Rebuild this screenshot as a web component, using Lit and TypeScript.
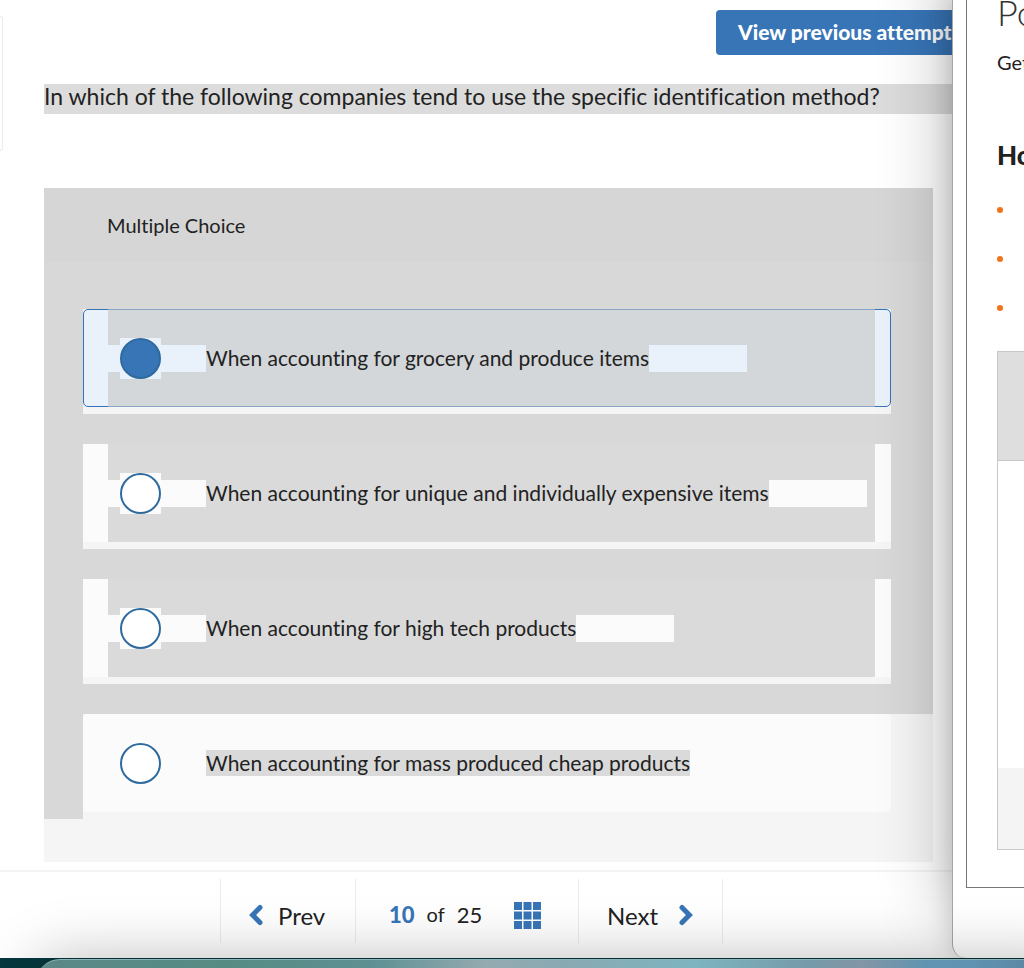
import { LitElement, html, css } from "lit";
import { customElement, state } from "lit/decorators.js";
import { classMap } from "lit/directives/class-map.js";

interface Choice {
  id: string;
  text: string;
}

const HIGHLIGHTED: Choice[] = [
  { id: "a", text: "When accounting for grocery and produce items" },
  { id: "b", text: "When accounting for unique and individually expensive items" },
  { id: "c", text: "When accounting for high tech products" },
];
const LAST: Choice = { id: "d", text: "When accounting for mass produced cheap products" };

@customElement("quiz-card")
class QuizCard extends LitElement {
  @state() private picked = "a";

  static styles = css`
    :host { display: block; background: #f5f5f5; padding-bottom: 43px; }
    .kind {
      margin: 0; padding: 0 63px; height: 74px; line-height: 74px;
      background: #d6d6d6; font-size: 20px; font-weight: 400;
    }
    .choices { border-left: 39px solid #d8d8d8; }
    .marked { background: #d8d8d8; padding: 47px 42px 30px 0; display: flex; flex-direction: column; gap: 30px; }
    .slot { background: #f5f5f5; padding-bottom: 7px; }
    .row { --paper: #fbfbfb; --shade: #dadada; background: var(--paper); padding: 0 16px 0 25px; }
    .line { display: flex; align-items: center; height: 98px; box-sizing: border-box; background: var(--shade); }
    .row.picked {
      --paper: #e9f1fb; --shade: #d3d7da;
      border: 1px solid #3374b6; border-radius: 5px; padding: 0 15px 0 24px;
    }
    .picked .line { margin: -1px 0; border: solid #8aa5c3; border-width: 1px 0; }
    .band { height: 27px; background: var(--paper); }
    .lead { width: 12px; }
    .mid { width: 45px; }
    .tail { width: 98px; }
    .well { display: flex; background: var(--paper); }
    .dot {
      appearance: none; margin: 0; width: 41px; height: 41px;
      border: 2px solid #2f6a9f; border-radius: 50%; background: #fff;
    }
    .dot:checked { background: #3875b7; }
    label { font-size: 21px; line-height: 26px; white-space: nowrap; }
    .final { margin-right: 42px; background: none; }
    .final .row { border-radius: 4px; }
    .final .line { background: none; }
    .final label { background: #dadada; }
  `;

  private choice(c: Choice, final = false) {
    return html`
      <div class=${classMap({ slot: true, final })}>
        <div class=${classMap({ row: true, picked: this.picked === c.id })}>
          <div class="line">
            <span class="band lead"></span>
            <span class="well">
              <input class="dot" type="radio" name="answer" id=${c.id}
                .checked=${this.picked === c.id} @change=${() => (this.picked = c.id)} />
            </span>
            <span class="band mid"></span>
            <label for=${c.id}>${c.text}</label>
            ${final ? null : html`<span class="band tail"></span>`}
          </div>
        </div>
      </div>`;
  }

  render() {
    return html`
      <h2 class="kind">Multiple Choice</h2>
      <div class="choices" role="radiogroup" aria-label="Multiple Choice">
        <div class="marked">${HIGHLIGHTED.map((c) => this.choice(c))}</div>
        ${this.choice(LAST, true)}
      </div>`;
  }
}

@customElement("quiz-pager")
class QuizPager extends LitElement {
  static styles = css`
    :host { display: block; border-top: 2px solid #f4f4f4; }
    nav { display: flex; padding: 7px 0 0 220px; }
    .cell {
      box-sizing: border-box; height: 64px; display: flex; align-items: center;
      border: 0; border-left: 1px solid #ececec; background: none; padding: 0 28px;
      font: inherit; font-size: 24px; color: #222; white-space: nowrap;
    }
    .prev { width: 135px; gap: 15px; padding-top: 8px; padding-right: 0; }
    .count { width: 223px; padding-left: 33px; padding-top: 6px; font-size: 22px; }
    .next { width: 145px; gap: 21px; padding-top: 8px; border-right: 1px solid #ececec; padding-right: 0; }
    .now { color: #3875b7; font-weight: 900; }
    .of { font-size: 20px; margin: 0 12px; }
    .grid { border: 0; background: none; padding: 2px 0 0; margin-left: 32px; display: flex; }
    svg { display: block; flex: none; }
    .arrow { fill: none; stroke: #3875b7; stroke-width: 5; stroke-linecap: round; stroke-linejoin: miter; }
    .tiles { fill: #3875b7; }
  `;

  render() {
    return html`
      <nav aria-label="Questions">
        <button class="cell prev">
          <svg class="arrow" width="14" height="22" viewBox="0 0 14 22"><path d="M11 3.5 L3.6 11 L11 18.5" /></svg>
          Prev
        </button>
        <div class="cell count">
          <span class="now">10</span><span class="of">of</span><span>25</span>
          <button class="grid" aria-label="Question list">
            <svg class="tiles" width="27" height="27" viewBox="0 0 27 27">
              <path d="M0 0h8v8H0z M9.5 0h8v8h-8z M19 0h8v8h-8z M0 9.5h8v8H0z M9.5 9.5h8v8h-8z M19 9.5h8v8h-8z M0 19h8v8H0z M9.5 19h8v8h-8z M19 19h8v8h-8z" />
            </svg>
          </button>
        </div>
        <button class="cell next">
          Next
          <svg class="arrow" width="14" height="22" viewBox="0 0 14 22"><path d="M3 3.5 L10.4 11 L3 18.5" /></svg>
        </button>
      </nav>`;
  }
}

@customElement("side-window")
class SideWindow extends LitElement {
  static styles = css`
    :host { display: block; box-sizing: border-box; padding-left: 13px; overflow: hidden; }
    .frame {
      box-sizing: border-box; height: 888px; width: 600px; padding-left: 30px;
      border-left: 1px solid #777; border-bottom: 1px solid #777;
    }
    h2 { margin: 0; font-size: 36px; line-height: 24px; font-weight: 300; color: #333; }
    p { margin: 26px 0 0; font-size: 20px; line-height: 24px; }
    h3 { margin: 65px 0 0; font-size: 26px; line-height: 32px; font-weight: 900; }
    ul { list-style: none; margin: 36px 0 0; padding: 0; display: flex; flex-direction: column; gap: 43px; }
    li { width: 6px; height: 6px; border-radius: 50%; background: #f1741a; }
    .table { margin-top: 40px; border: 1px solid #c8c8c8; height: 497px; display: flex; flex-direction: column; }
    .head { height: 108px; background: #dedede; border-bottom: 1px solid #c8c8c8; }
    .body { flex: 1; }
    .foot { height: 81px; background: #f4f4f4; }
  `;

  render() {
    return html`
      <div class="frame">
        <h2>Po</h2>
        <p>Get</p>
        <h3>Ho</h3>
        <ul><li></li><li></li><li></li></ul>
        <div class="table"><div class="head"></div><div class="body"></div><div class="foot"></div></div>
      </div>`;
  }
}

@customElement("app-root")
class AppRoot extends LitElement {
  static styles = css`
    :host {
      display: block; font-family: Lato, "Open Sans", sans-serif; color: #222;
      font-variant-ligatures: none;
    }
    .desktop {
      position: relative; min-height: 100vh; overflow: hidden; display: flex; flex-direction: column;
      background: #06383f;
    }
    .browser { flex: 1; background: #fff; display: flex; flex-direction: column; }
    .page { flex: 1; display: flex; align-items: flex-start; }
    .edge {
      box-sizing: border-box; flex: none; width: 3px; height: 135px; margin-top: 16px;
      border: 1px solid #ececec; border-left: 0; border-radius: 0 4px 4px 0;
    }
    main { flex: 1; min-width: 0; margin-left: 41px; padding-top: 10px; display: flex; flex-direction: column; }
    .attempt {
      align-self: flex-end; margin-right: 52px; height: 45px; padding: 0 22px 3px; width: 256px; text-align: left;
      border: 0; border-radius: 4px; background: #3875b7; color: #fff; white-space: nowrap;
      font: inherit; font-size: 21px; font-weight: 900;
    }
    h1 {
      margin: 29px 0 74px; height: 30px; line-height: 24px; background: #dcdcdc;
      font-size: 23px; font-weight: 400; white-space: nowrap;
    }
    quiz-card { margin: 0 91px 8px 0; }
    quiz-pager { height: 88px; box-sizing: border-box; }
    .strip { height: 10px; }
    side-window {
      position: absolute; right: 0; top: 0; bottom: 10px; width: 72px; background: #fff;
      border-left: 1px solid #a6a6a6; border-radius: 0 0 0 14px;
      box-shadow: 0 -40px 72px rgba(0, 0, 0, 0.3), 0 0 24px rgba(0, 0, 0, 0.16);
    }
    .dock {
      position: absolute; left: 36px; right: -60px; bottom: -60px; height: 68px; border-radius: 24px 0 0 0;
      border-top: 1px solid #8db4b9;
      background: linear-gradient(90deg, #5c8888 0, #568b83 18%, #5e9093 32%, #95aab1 43%, #8aa9b2 50%, #7db4bf 63%, #7699a9 74%, #8295a5 79%, #6094b2 85%, #6093b2 89%, #587f98 100%);
      box-shadow: 0 0 60px rgba(0, 0, 0, 0.27);
    }
  `;

  render() {
    return html`
      <div class="desktop">
        <div class="browser">
          <div class="page">
            <div class="edge"></div>
            <main>
              <button class="attempt">View previous attempt</button>
              <h1>In which of the following companies tend to use the specific identification method?</h1>
              <quiz-card></quiz-card>
            </main>
          </div>
          <quiz-pager></quiz-pager>
        </div>
        <div class="strip"></div>
        <side-window></side-window>
        <div class="dock"></div>
      </div>`;
  }
}
